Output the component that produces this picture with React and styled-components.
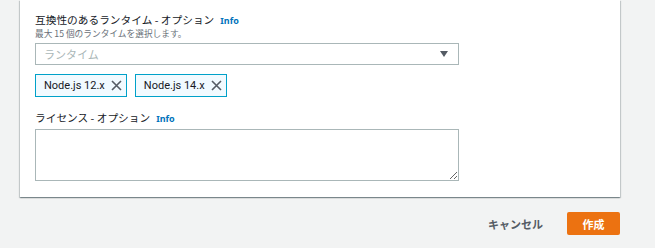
import React from 'react';
import styled, { createGlobalStyle } from 'styled-components';

const GlobalStyle = createGlobalStyle`
  body {
    margin: 0;
    background: #f2f3f3;
    font-family: "Noto Sans CJK JP", "Noto Sans", sans-serif;
    color: #16191f;
  }
`;

const Page = styled.div`
  width: 655px;
  height: 248px;
  padding-left: 20px;
  box-sizing: border-box;
  overflow: hidden;
`;

const Panel = styled.div`
  width: 600px;
  background: #fff;
  box-sizing: border-box;
  padding: 12px 15px 16px;
  box-shadow: 0 1px 1px 0 rgba(0, 28, 36, 0.3), 1px 1px 1px 0 rgba(0, 28, 36, 0.15),
    -1px 1px 1px 0 rgba(0, 28, 36, 0.15);
`;

const Field = styled.div`
  margin-bottom: ${({ $gap }) => $gap || 0}px;
`;

const Label = styled.div`
  display: flex;
  align-items: baseline;
  gap: 6px;
  font-size: 10.7px;
  line-height: 15px;
  color: #16191f;
`;

const Info = styled.span`
  font-size: 9px;
  font-weight: 700;
  color: #0073bb;
  font-family: "Noto Sans", sans-serif;
`;

const Hint = styled.div`
  font-size: 8.7px;
  line-height: 11px;
  color: #687078;
`;

const Select = styled.div`
  margin-top: 4px;
  width: 424px;
  height: 22px;
  box-sizing: border-box;
  border: 1px solid #aab7b8;
  display: flex;
  align-items: center;
  justify-content: space-between;
  padding: 0 10px 0 8px;
  font-size: 11px;
  color: #aab7b8;
`;

const Caret = styled.span`
  width: 0;
  height: 0;
  border-left: 4px solid transparent;
  border-right: 4px solid transparent;
  border-top: 6px solid #545b64;
`;

const Tokens = styled.div`
  display: flex;
  gap: 8px;
  margin-top: 9px;
`;

const Token = styled.div`
  display: flex;
  align-items: center;
  gap: 6px;
  height: 23px;
  box-sizing: border-box;
  border: 1px solid #00a1c9;
  background: #f1faff;
  padding: 0 4px 0 8px;
  font-family: Roboto, "Noto Sans", sans-serif;
  font-size: 11px;
  color: #16191f;
`;

const Close = styled.svg`
  width: 11px;
  height: 11px;
`;

const TextArea = styled.textarea`
  display: block;
  margin-top: 3px;
  width: 424px;
  height: 52px;
  box-sizing: border-box;
  border: 1px solid #aab7b8;
  border-radius: 0;
  resize: vertical;
  padding: 4px 8px;
`;

const Footer = styled.div`
  width: 600px;
  display: flex;
  justify-content: flex-end;
  align-items: center;
  gap: 24px;
  padding-top: 15px;
`;

const LinkButton = styled.button`
  border: none;
  background: none;
  padding: 0;
  font-family: "Noto Sans CJK JP", sans-serif;
  font-size: 11px;
  font-weight: 700;
  color: #545b64;
`;

const PrimaryButton = styled.button`
  width: 53px;
  height: 23px;
  border: none;
  border-radius: 2px;
  background: #ec7211;
  color: #fff;
  font-family: "Noto Sans CJK JP", sans-serif;
  font-size: 11px;
  font-weight: 700;
  padding: 0;
`;

const X = () => (
  <Close viewBox="0 0 11 11">
    <path d="M1 1 L10 10 M10 1 L1 10" stroke="#545b64" strokeWidth="1.6" fill="none" />
  </Close>
);

export default function App() {
  return (
    <Page>
      <GlobalStyle />
      <Panel>
        <Field $gap={13}>
          <Label>
            互換性のあるランタイム - オプション <Info>Info</Info>
          </Label>
          <Hint>最大 15 個のランタイムを選択します。</Hint>
          <Select>
            ランタイム
            <Caret />
          </Select>
          <Tokens>
            <Token>
              Node.js 12.x <X />
            </Token>
            <Token>
              Node.js 14.x <X />
            </Token>
          </Tokens>
        </Field>
        <Field>
          <Label>
            ライセンス - オプション <Info>Info</Info>
          </Label>
          <TextArea />
        </Field>
      </Panel>
      <Footer>
        <LinkButton>キャンセル</LinkButton>
        <PrimaryButton>作成</PrimaryButton>
      </Footer>
    </Page>
  );
}
